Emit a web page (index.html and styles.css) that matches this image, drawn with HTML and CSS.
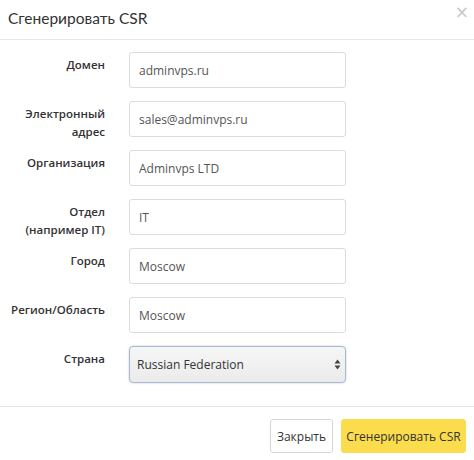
FILE: index.html
```html
<!DOCTYPE html>
<html lang="ru">
<head>
<meta charset="utf-8">
<link rel="stylesheet" href="styles.css">
</head>
<body>
<div class="modal">
  <div class="modal-header">
    <h4 class="title">Сгенерировать CSR</h4>
    <span class="close">×</span>
  </div>
  <div class="modal-body">
    <div class="row"><label class="lbl">Домен</label><input class="ctl" value="adminvps.ru"></div>
    <div class="row"><label class="lbl">Электронный адрес</label><input class="ctl" value="sales@adminvps.ru"></div>
    <div class="row"><label class="lbl">Организация</label><input class="ctl" value="Adminvps LTD"></div>
    <div class="row"><label class="lbl">Отдел<br>(например IT)</label><input class="ctl" value="IT"></div>
    <div class="row"><label class="lbl">Город</label><input class="ctl" value="Moscow"></div>
    <div class="row"><label class="lbl">Регион/Область</label><input class="ctl" value="Moscow"></div>
    <div class="row"><label class="lbl">Страна</label>
      <div class="sel-wrap">
        <select class="sel"><option>Russian Federation</option></select>
        <svg class="arrows" width="7" height="11" viewBox="0 0 7 11"><path d="M3.5 0.5 L6.5 4.5 L0.5 4.5 Z M3.5 10.5 L6.5 6.5 L0.5 6.5 Z" fill="#444"/></svg>
      </div>
    </div>
  </div>
  <div class="modal-footer">
    <button class="btn btn-default">Закрыть</button>
    <button class="btn btn-primary">Сгенерировать CSR</button>
  </div>
</div>
</body>
</html>
```
FILE: styles.css
```css
* { box-sizing: border-box; }
html, body { margin: 0; padding: 0; background: #fff; }
body { font-family: "Open Sans", "Liberation Sans", sans-serif; color: #333; }
.modal { width: 474px; }
.modal-header {
  height: 40px;
  border-bottom: 1px solid #e8e8e8;
  display: flex;
  align-items: center;
  justify-content: space-between;
  padding: 0 5px 4px 8px;
}
.title {
  margin: 0;
  font-family: "Lato", "Open Sans", sans-serif;
  font-weight: 400;
  font-size: 15.5px;
  color: #333;
}
.close { color: #c8c8c8; font-size: 17px; line-height: 1; margin-top: -10px; font-family: "DejaVu Sans", sans-serif; }
.modal-body { padding: 12px 0 24px 0; display: flex; flex-direction: column; gap: 13px; }
.row { display: grid; grid-template-columns: 105px 217px; column-gap: 24px; align-items: start; height: 36px; }
.lbl {
  text-align: right;
  font-weight: 600;
  font-size: 11.5px;
  line-height: 18px;
  padding-top: 4px;
  color: #333;
}
.ctl {
  height: 36px;
  width: 217px;
  border: 1px solid #dcdcdc;
  border-radius: 3px;
  padding: 0 9px;
  font-family: "Open Sans", sans-serif;
  font-size: 12px;
  color: #555;
  background: #fff;
  outline: none;
}
.sel-wrap { position: relative; width: 217px; height: 37px; }
.sel {
  appearance: none;
  -webkit-appearance: none;
  width: 217px;
  height: 37px;
  border: 1px solid #a9b8cc;
  border-radius: 4px;
  padding: 0 7px;
  font-family: "Open Sans", sans-serif;
  font-size: 12px;
  color: #333;
  background: linear-gradient(#f6f6f6, #ebebeb);
  box-shadow: 0 0 2px rgba(110, 150, 200, 0.5);
  outline: none;
}
.arrows { position: absolute; right: 5px; top: 13px; }
.modal-footer {
  border-top: 1px solid #e5e5e5;
  padding: 12px 8px 0 0;
  display: flex;
  justify-content: flex-end;
  gap: 8px;
}
.btn {
  height: 34px;
  border-radius: 3px;
  font-family: "Open Sans", sans-serif;
  font-size: 12px;
  padding: 0;
  white-space: nowrap;
  color: #333;
}
.btn-default { background: #fff; border: 1px solid #d6d6d6; width: 63px; }
.btn-primary { background: #fbdc4c; border: 1px solid #fbdc4c; width: 125px; }
```
